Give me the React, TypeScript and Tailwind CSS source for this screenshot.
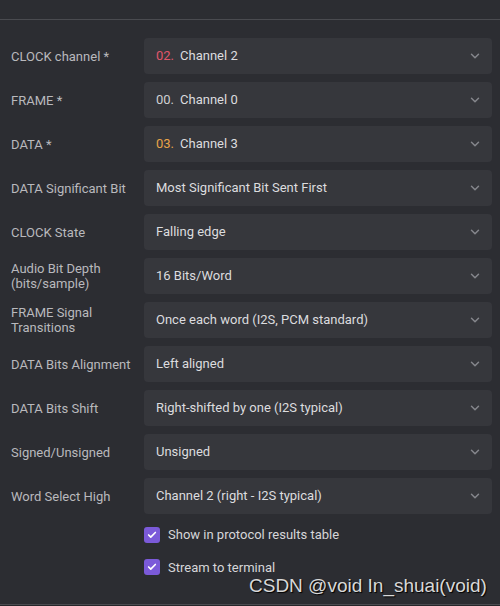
import { ChevronDown, Check } from 'lucide-react';

type Option = {
  label: string[];
  value: string;
  prefix?: string;
  prefixColor?: string;
};

const options: Option[] = [
  { label: ['CLOCK channel *'], prefix: '02.', prefixColor: 'text-[#e0566b]', value: 'Channel 2' },
  { label: ['FRAME *'], prefix: '00.', prefixColor: 'text-[#cfcfd2]', value: 'Channel 0' },
  { label: ['DATA *'], prefix: '03.', prefixColor: 'text-[#e9a448]', value: 'Channel 3' },
  { label: ['DATA Significant Bit'], value: 'Most Significant Bit Sent First' },
  { label: ['CLOCK State'], value: 'Falling edge' },
  { label: ['Audio Bit Depth', '(bits/sample)'], value: '16 Bits/Word' },
  { label: ['FRAME Signal', 'Transitions'], value: 'Once each word (I2S, PCM standard)' },
  { label: ['DATA Bits Alignment'], value: 'Left aligned' },
  { label: ['DATA Bits Shift'], value: 'Right-shifted by one (I2S typical)' },
  { label: ['Signed/Unsigned'], value: 'Unsigned' },
  { label: ['Word Select High'], value: 'Channel 2 (right - I2S typical)' },
];

const checks = ['Show in protocol results table', 'Stream to terminal'];

export default function App() {
  return (
    <div className="relative w-[500px] h-[606px] overflow-hidden bg-[#2c2d32] font-['Roboto','Liberation_Sans',sans-serif]">
      {/* header strip */}
      <div className="h-[20px] border-b border-[#4a4b50]" />

      {/* settings rows */}
      <div className="flex flex-col gap-2 pt-[18px] pl-[11px]">
        {options.map((o) => (
          <div key={o.label.join(' ')} className="flex items-center">
            <div className="w-[133px] shrink-0 text-[13px] leading-[15px] text-[#b9b9bd]">
              {o.label.map((l) => (
                <div key={l}>{l}</div>
              ))}
            </div>
            <div className="w-[348px] h-9 rounded bg-[#36373c] flex items-center justify-between pl-3 pr-[10px]">
              <span className="text-[13px] text-[#dcdcdf] flex items-center">
                {o.prefix && <span className={`${o.prefixColor} mr-[6px]`}>{o.prefix}</span>}
                {o.value}
              </span>
              <ChevronDown className="w-[14px] h-[14px] text-[#85868c]" strokeWidth={2.5} />
            </div>
          </div>
        ))}
      </div>

      {/* checkboxes */}
      <div className="flex flex-col gap-[13px] pt-[11px] pl-[144px]">
        {checks.map((c) => (
          <div key={c} className="flex items-center gap-2">
            <div className="w-4 h-4 rounded-[3px] bg-[#7b5ad9] flex items-center justify-center">
              <Check className="w-[10px] h-[10px] text-white" strokeWidth={4} />
            </div>
            <span className="text-[13px] text-[#d6d6d9]">{c}</span>
          </div>
        ))}
      </div>

      {/* bottom divider */}
      <div className="absolute left-0 right-0 top-[604px] h-[2px] border-t border-[#4a4b50] bg-[#26272b]" />

      {/* watermark */}
      <div className="absolute left-[249px] top-[575px] text-[19px] leading-[22px] text-[#d8d8d8] font-['Liberation_Sans',sans-serif] [text-shadow:1px_1px_1px_#000]">
        CSDN @void In_shuai(void)
      </div>
    </div>
  );
}
